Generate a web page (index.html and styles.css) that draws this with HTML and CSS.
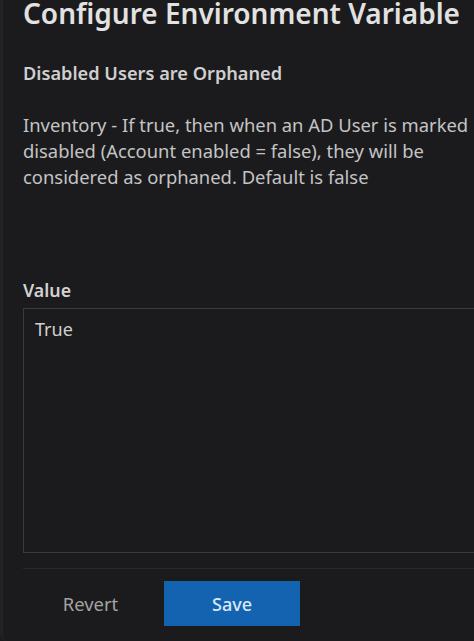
FILE: index.html
```html
<!DOCTYPE html>
<html lang="en">
<head>
<meta charset="UTF-8">
<meta name="viewport" content="width=device-width, initial-scale=1.0">
<title>Configure Environment Variable</title>
<link rel="stylesheet" href="styles.css">
</head>
<body>
    <div class="panel">
        <h1>Configure Environment Variable</h1>
        <h2>Disabled Users are Orphaned</h2>
        <p class="description">Inventory - If true, then when an AD User is marked disabled (Account enabled = false), they will be considered as orphaned. Default is false</p>

        <label class="field-label" for="value">Value</label>
        <textarea id="value" class="value-box">True</textarea>

        <div class="actions">
            <button class="btn-revert">Revert</button>
            <button class="btn-save">Save</button>
        </div>
    </div>
</body>
</html>
```

FILE: styles.css
```css
/* Dark settings panel */
html, body {
    margin: 0;
    padding: 0;
    height: 100%;
    background-color: #1b1b1d;
    overflow: hidden;
}
body {
    font-family: "Noto Sans", "Open Sans", sans-serif;
    color: #d6d6d6;
}
.panel {
    height: 100%;
    box-sizing: border-box;
    border-left: 3px solid #232325;
    border-bottom-left-radius: 8px;
    padding: 0 0 0 20px;
}
h1 {
    margin: 0;
    font-size: 28px;
    line-height: 26px;
    font-weight: 600;
    color: #e2e2e2;
    white-space: nowrap;
}
h2 {
    margin: 35px 0 0;
    font-size: 18.2px;
    line-height: 24px;
    font-weight: 600;
    color: #cfcfcf;
}
.description {
    margin: 27px 0 0;
    font-size: 18.4px;
    line-height: 26px;
    color: #c4c4c4;
}
.field-label {
    display: block;
    margin-top: 88px;
    font-size: 17.8px;
    line-height: 24px;
    font-weight: 600;
    color: #d2d2d2;
}
.value-box {
    display: block;
    box-sizing: border-box;
    width: calc(100% + 20px);
    height: 245px;
    margin-top: 6px;
    padding: 8px 11px;
    background-color: #1b1b1d;
    border: 1px solid #3b3b3d;
    border-radius: 0;
    color: #cfcfcf;
    font-family: inherit;
    font-size: 18px;
    line-height: 24px;
    resize: none;
    outline: none;
}
.actions {
    display: flex;
    align-items: center;
    gap: 6px;
    margin-top: 15px;
    padding-top: 12px;
    border-top: 1px solid #29292b;
    margin-right: -20px;
}
.btn-revert {
    width: 135px;
    height: 45px;
    background: none;
    border: none;
    color: #a3a3a3;
    font-family: inherit;
    font-size: 18.4px;
    cursor: pointer;
}
.btn-save {
    width: 136px;
    height: 45px;
    background-color: #1363b1;
    border: none;
    color: #dbe8f6;
    font-family: inherit;
    font-size: 18px;
    font-weight: 500;
    cursor: pointer;
}
```
